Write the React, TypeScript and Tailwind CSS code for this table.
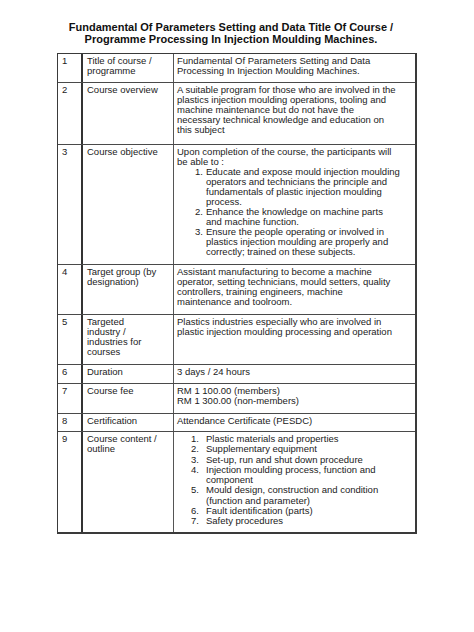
import React from "react"

type Row = {
  no: string
  label: React.ReactNode
  body: React.ReactNode
  pb?: string
}

const objectives = [
  <>Educate and expose mould injection moulding<br />operators and technicians the principle and<br />fundamentals of plastic injection moulding<br />process.</>,
  <>Enhance the knowledge on machine parts<br />and machine function.</>,
  <>Ensure the people operating or involved in<br />plastics injection moulding are properly and<br />correctly; trained on these subjects.</>,
]

const contents = [
  <>Plastic materials and properties</>,
  <>Supplementary equipment</>,
  <>Set-up, run and shut down procedure</>,
  <>Injection moulding process, function and<br />component</>,
  <>Mould design, construction and condition<br />(function and parameter)</>,
  <>Fault identification (parts)</>,
  <>Safety procedures</>,
]

const rows: Row[] = [
  {
    no: "1",
    label: <>Title of course /<br />programme</>,
    body: <>Fundamental Of Parameters Setting and Data<br />Processing In Injection Moulding Machines.</>,
  },
  {
    no: "2",
    label: "Course overview",
    body: (
      <>
        A suitable program for those who are involved in the<br />
        plastics injection moulding operations, tooling and<br />
        machine maintenance but do not have the<br />
        necessary technical knowledge and education on<br />
        this subject
      </>
    ),
    pb: "pb-[9px]",
  },
  {
    no: "3",
    label: "Course objective",
    body: (
      <>
        <p>Upon completion of the course, the participants will<br />be able to :</p>
        <ol className="pl-[18px]">
          {objectives.map((item, i) => (
            <li key={i} className="flex">
              <span className="w-[11px] shrink-0">{i + 1}.</span>
              <span>{item}</span>
            </li>
          ))}
        </ol>
      </>
    ),
    pb: "pb-[7px]",
  },
  {
    no: "4",
    label: <>Target group (by<br />designation)</>,
    body: (
      <>
        Assistant manufacturing to become a machine<br />
        operator, setting technicians, mould setters, quality<br />
        controllers, training engineers, machine<br />
        maintenance and toolroom.
      </>
    ),
    pb: "pb-[7px]",
  },
  {
    no: "5",
    label: <>Targeted<br />industry /<br />industries for<br />courses</>,
    body: <>Plastics industries especially who are involved in<br />plastic injection moulding processing and operation</>,
    pb: "pb-[7px]",
  },
  { no: "6", label: "Duration", body: "3 days / 24 hours" },
  {
    no: "7",
    label: "Course fee",
    body: <>RM 1 100.00 (members)<br />RM 1 300.00 (non-members)</>,
    pb: "pb-[7px]",
  },
  { no: "8", label: "Certification", body: "Attendance Certificate (PESDC)", pb: "pb-[5px]" },
  {
    no: "9",
    label: <>Course content /<br />outline</>,
    body: (
      <ol className="pl-[14px] leading-[10.3px]">
        {contents.map((item, i) => (
          <li key={i} className="flex">
            <span className="w-[15px] shrink-0">{i + 1}.</span>
            <span>{item}</span>
          </li>
        ))}
      </ol>
    ),
    pb: "pb-[5px]",
  },
]

export default function App() {
  return (
    <div className="min-h-screen bg-white pt-[21px] font-['Liberation_Sans',Arial,sans-serif] text-[#222]">
      {/* Heading */}
      <h1 className="mx-auto w-[360px] pr-[12px] text-center text-[11px] font-bold leading-[12px] text-[#111]">
        Fundamental Of Parameters Setting and Data Title Of Course /<br />
        Programme Processing In Injection Moulding Machines.
      </h1>

      {/* Course table */}
      <div className="mx-auto mt-[8px] w-[360px] border-t border-l border-r-2 border-b-2 border-[#3a3a3a] text-[9.5px] leading-[10px]">
        {rows.map((r, i) => (
          <div
            key={r.no}
            className={
              "grid grid-cols-[25px_91px_1fr] " +
              (i > 0 ? "border-t border-[#4a4a4a]" : "")
            }
          >
            <div className={"border-r-2 border-[#333] pl-[4px] pt-[2px] " + (r.pb ?? "pb-[6px]")}>
              {r.no}
            </div>
            <div className={"border-r border-[#555] pl-[4px] pt-[2px] " + (r.pb ?? "pb-[6px]")}>
              {r.label}
            </div>
            <div className={"pl-[3px] pr-[4px] pt-[2px] " + (r.pb ?? "pb-[6px]")}>
              {r.body}
            </div>
          </div>
        ))}
      </div>
    </div>
  )
}
